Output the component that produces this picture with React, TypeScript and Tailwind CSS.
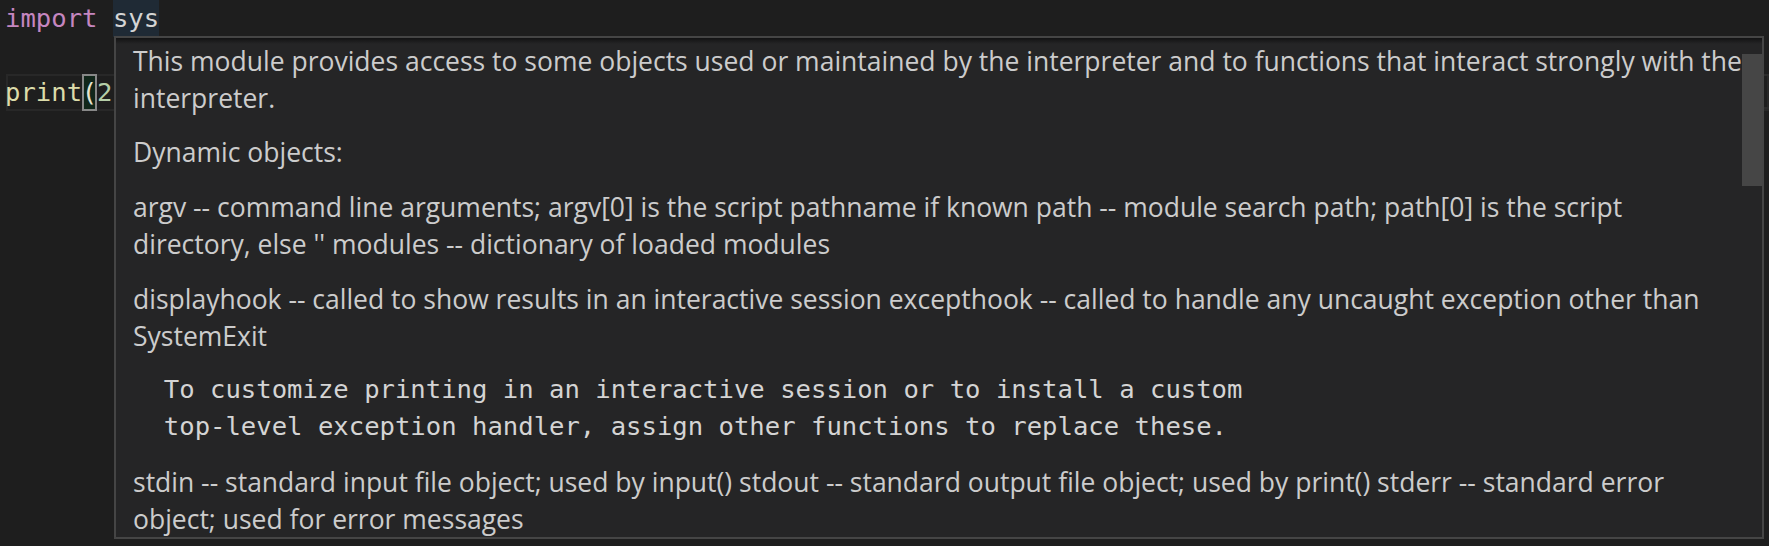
import React from 'react';

const mono = { fontFamily: '"DejaVu Sans Mono", "Liberation Mono", monospace' };

// Docstring content of the hover, one entry per block, lines already broken
const hoverBlocks = [
  {
    type: 'p',
    lines: [
      'This module provides access to some objects used or maintained by the interpreter and to functions that interact strongly with the',
      'interpreter.',
    ],
    className: 'mb-[17px]',
  },
  { type: 'p', lines: ['Dynamic objects:'], className: 'mb-[18px]' },
  {
    type: 'p',
    lines: [
      'argv -- command line arguments; argv[0] is the script pathname if known path -- module search path; path[0] is the script',
      "directory, else '' modules -- dictionary of loaded modules",
    ],
    className: 'mb-[18px]',
  },
  {
    type: 'p',
    lines: [
      'displayhook -- called to show results in an interactive session excepthook -- called to handle any uncaught exception other than',
      'SystemExit',
    ],
    className: 'mb-[16px]',
  },
  {
    type: 'pre',
    lines: [
      '  To customize printing in an interactive session or to install a custom',
      '  top-level exception handler, assign other functions to replace these.',
    ],
    className: 'mb-[19px]',
  },
  {
    type: 'p',
    lines: [
      'stdin -- standard input file object; used by input() stdout -- standard output file object; used by print() stderr -- standard error',
      'object; used for error messages',
    ],
    className: '',
  },
];

function HoverWidget() {
  return (
    <div className="absolute left-[114px] top-[36px] h-[503px] w-[1650px] overflow-hidden border-2 border-[#454545] bg-[#252526]">
      {/* scroll shadow */}
      <div className="absolute inset-x-0 top-0 h-[6px] bg-gradient-to-b from-black/50 to-transparent" />
      <div
        className="pl-[17px] pt-[5px] text-[26.5px] leading-[37px] text-[#cccccc]"
        style={{ fontFamily: '"Open Sans", "Noto Sans", sans-serif' }}
      >
        {hoverBlocks.map((block, i) =>
          block.type === 'pre' ? (
            <pre
              key={i}
              className={`whitespace-pre text-[25.6px] leading-[37px] text-[#d4d4d4] ${block.className}`}
              style={mono}
            >
              {block.lines.join('\n')}
            </pre>
          ) : (
            <p key={i} className={`whitespace-nowrap ${block.className}`}>
              {block.lines.map((line, j) => (
                <React.Fragment key={j}>
                  {line}
                  {j < block.lines.length - 1 && <br />}
                </React.Fragment>
              ))}
            </p>
          )
        )}
      </div>
      {/* vertical scrollbar thumb */}
      <div className="absolute right-0 top-[16px] h-[132px] w-[20px] bg-[#464646]" />
    </div>
  );
}

export default function App() {
  return (
    <div className="relative h-[546px] w-[1769px] overflow-hidden bg-[#1e1e1e]">
      <div className="text-[25.6px] leading-[37px] text-[#d4d4d4]" style={mono}>
        <div className="flex h-[37px] whitespace-pre pl-[5px]">
          <span className="text-[#c586c0]">import</span>
          <span> </span>
          <span className="bg-[#1f2a35]">sys</span>
        </div>
        <div className="h-[37px]" />
        <div className="ml-[6px] flex h-[37px] items-stretch whitespace-pre border-2 border-[#282828]">
          <span className="-ml-[3px] -mt-[2px] leading-[37px] text-[#dcdcaa]">print</span>
          <span className="-mt-[2px] flex h-[37px] w-[15px] items-center justify-center border-2 border-[#888888] bg-[#11261a] leading-[33px] text-[#e8e4d0]">
            (
          </span>
          <span className="-mt-[2px] leading-[37px] text-[#b5cea8]">2</span>
        </div>
      </div>
      <HoverWidget />
      {/* overview ruler marks at right edge */}
      <div className="absolute right-0 top-[74px] h-[2px] w-[5px] bg-[#2c2c2c]" />
      <div className="absolute right-0 top-[107px] h-[2px] w-[5px] bg-[#2c2c2c]" />
    </div>
  );
}
